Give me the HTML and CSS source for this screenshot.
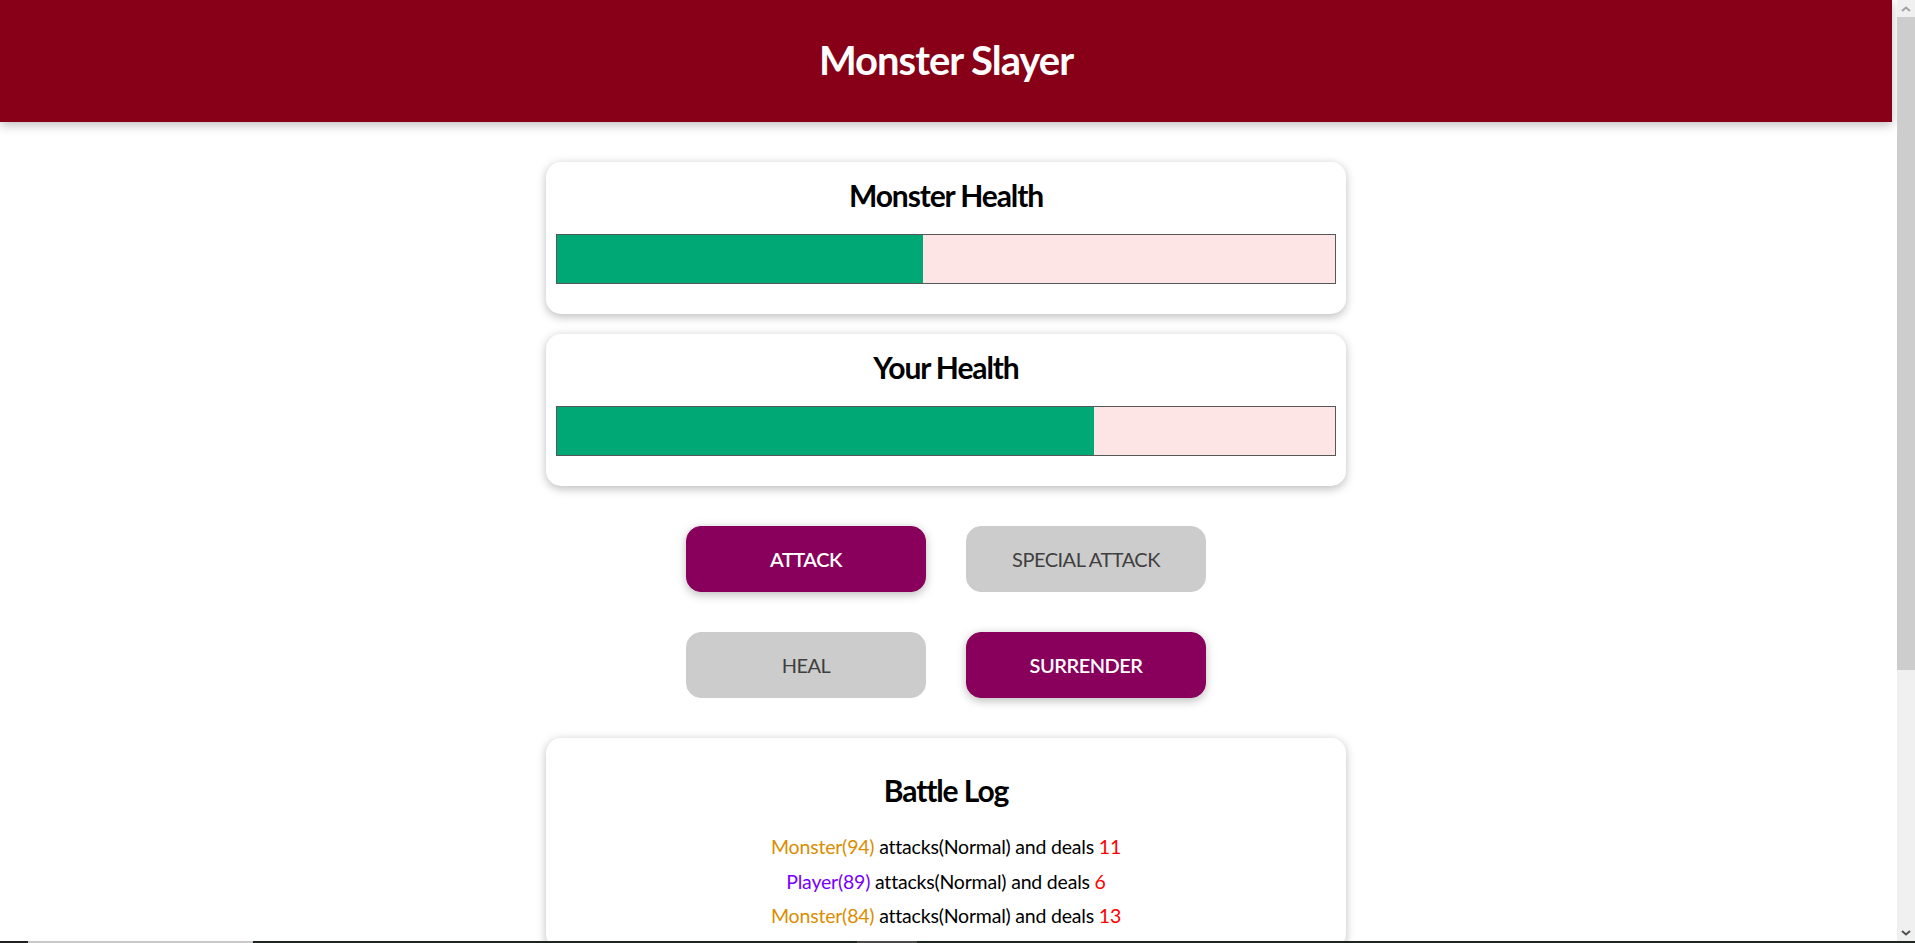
FILE: index.html
```html
<!DOCTYPE html>
<html>
<head>
    <title>Monster Slayer</title>
    <link rel="stylesheet" href="styles.css">
</head>
<body>
    <div class="window">
        <div class="viewport">
            <header>
                <h1>Monster Slayer</h1>
            </header>

            <section id="monster" class="container">
                <h2>Monster Health</h2>
                <div class="healthbar">
                    <div class="healthbar__value" style="width: 47%;"></div>
                </div>
            </section>

            <section id="player" class="container">
                <h2>Your Health</h2>
                <div class="healthbar">
                    <div class="healthbar__value" style="width: 69%;"></div>
                </div>
            </section>

            <section id="controls">
                <button>ATTACK</button>
                <button disabled>SPECIAL ATTACK</button>
                <button disabled>HEAL</button>
                <button>SURRENDER</button>
            </section>

            <section id="log" class="container">
                <h2>Battle Log</h2>
                <ul>
                    <li>
                        <span class="log--monster">Monster(94)</span>
                        attacks(Normal) and deals
                        <span class="log--damage">11</span>
                    </li>
                    <li>
                        <span class="log--player">Player(89)</span>
                        attacks(Normal) and deals
                        <span class="log--damage">6</span>
                    </li>
                    <li>
                        <span class="log--monster">Monster(84)</span>
                        attacks(Normal) and deals
                        <span class="log--damage">13</span>
                    </li>
                </ul>
            </section>
        </div>

        <div class="scrollbar">
            <div class="scrollbar__arrow">
                <svg width="10" height="6" viewBox="0 0 10 6">
                    <path d="M1 5 L5 1.5 L9 5" fill="none" stroke="#a3a3a3" stroke-width="2"/>
                </svg>
            </div>
            <div class="scrollbar__thumb"></div>
            <div class="scrollbar__track"></div>
            <div class="scrollbar__arrow">
                <svg width="10" height="6" viewBox="0 0 10 6">
                    <path d="M1 1 L5 4.5 L9 1" fill="none" stroke="#505050" stroke-width="2"/>
                </svg>
            </div>
        </div>
    </div>

    <div class="taskbar">
        <div class="taskbar__start"></div>
        <div class="taskbar__search"></div>
        <div class="taskbar__apps"></div>
        <div class="taskbar__active"></div>
        <div class="taskbar__apps"></div>
    </div>
</body>
</html>
```

FILE: styles.css
```css
* {
    box-sizing: border-box;
}
html {
    font-family: Lato, "Open Sans", sans-serif;
    font-size: 20px;
    letter-spacing: -0.025em;
}
body {
    margin: 0;
    background-color: #fff;
}
.window {
    display: flex;
    height: 941px;
}
.viewport {
    flex: 1;
    overflow: hidden;
    padding-right: 5px;
}
header {
    padding: 36px 0 38px;
    background-color: #880017;
    color: white;
    text-align: center;
    margin-bottom: 40px;
    box-shadow: 0 2.5px 10px rgba(0, 0, 0, 0.26);
}
header h1 {
    margin: 0;
    font-size: 40px;
    font-weight: bold;
    letter-spacing: -1px;
    line-height: 48px;
}
section {
    width: 90%;
    max-width: 800px;
    margin: auto;
}
.container {
    text-align: center;
    padding: 10px;
    margin: 20px auto;
    box-shadow: 0 2.5px 10px rgba(0, 0, 0, 0.26);
    border-radius: 15px;
    background-color: white;
}
.container h2 {
    font-size: 30px;
    letter-spacing: -1.1px;
    line-height: 37px;
    font-weight: bold;
}
#monster h2,
#player h2 {
    margin: 5px;
}
.healthbar {
    width: 100%;
    height: 50px;
    border: 1px solid #575757;
    margin: 20px 0;
    background: #fde5e5;
}
.healthbar__value {
    background-color: #00a876;
    height: 100%;
}
#controls {
    display: flex;
    flex-wrap: wrap;
    justify-content: center;
}
button {
    font: inherit;
    font-weight: 600;
    letter-spacing: -0.5px;
    line-height: 24px;
    border: 1px solid #88005b;
    background-color: #88005b;
    color: white;
    padding: 20px 40px;
    border-radius: 15px;
    margin: 20px;
    width: 240px;
    cursor: pointer;
    box-shadow: 0 2.5px 10px rgba(0, 0, 0, 0.26);
}
button:disabled {
    font-weight: normal;
    background-color: #ccc;
    border-color: #ccc;
    box-shadow: none;
    color: #3f3f3f;
    cursor: not-allowed;
}
#log h2 {
    margin: 24px 0 26px;
}
#log ul {
    list-style: none;
    margin: 0;
    padding: 0;
}
#log li {
    margin: 10px 0;
    font-size: 19.5px;
    letter-spacing: -0.2px;
    line-height: 24.5px;
}
.log--player {
    color: #7700ff;
}
.log--monster {
    color: #da8d00;
}
.log--damage {
    color: red;
}
.scrollbar {
    width: 18px;
    display: flex;
    flex-direction: column;
    background-color: #f0f0f0;
}
.scrollbar__arrow {
    height: 17px;
    display: flex;
    align-items: center;
    justify-content: center;
}
.scrollbar__thumb {
    height: 653px;
    background-color: #cdcdcd;
}
.scrollbar__track {
    flex: 1;
}
.taskbar {
    display: flex;
    height: 2px;
    background-color: #1e2620;
}
.taskbar__start {
    width: 28px;
    background-color: #202020;
}
.taskbar__search {
    width: 225px;
    background-color: #c8c8c8;
}
.taskbar__apps {
    width: 604px;
}
.taskbar__active {
    width: 60px;
    background-color: #4a4a4a;
}
```
